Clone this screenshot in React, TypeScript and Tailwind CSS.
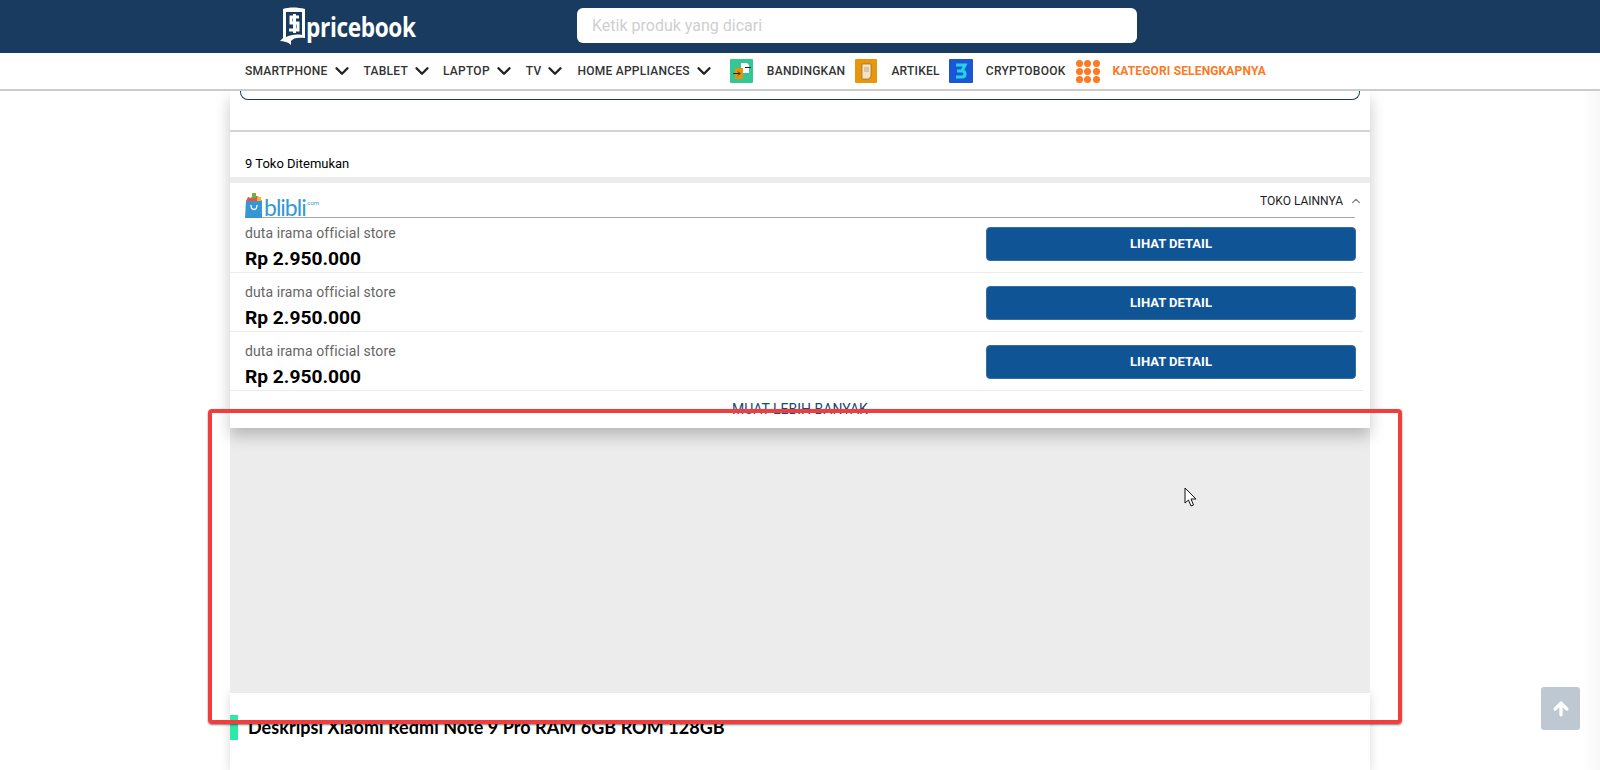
import React from 'react';
import { ChevronDown, ChevronUp, ArrowUp } from 'lucide-react';

const NAV_ITEMS = [
  { label: 'SMARTPHONE', gap: 'mr-[11px]' },
  { label: 'TABLET', gap: 'mr-[10px]' },
  { label: 'LAPTOP', gap: 'mr-[11px]' },
  { label: 'TV', gap: 'mr-[11px]' },
  { label: 'HOME APPLIANCES', gap: 'mr-[15px]' },
];

function PricebookLogo() {
  return (
    <div className="flex items-center w-[140px] h-[40px] mt-[6px]">
      <svg width="26" height="38" viewBox="0 0 26 38" className="shrink-0">
        <path d="M3 2 C9 0 17 0 25 2 V31 C18 30 13 31 11 34 L11 38 C8 35 4 34 0 34 L3 31 Z" fill="#fff" />
        <path d="M6 5 H22 V28 C16 27 10 28 6 30 Z" fill="#183b5f" />
        <path d="M19 10 H11 V16 H18 V23 H9 M14.5 7 V26" fill="none" stroke="#fff" strokeWidth="3" />
      </svg>
      <span className="text-white text-[26px] font-bold leading-none mt-[1px] tracking-[-0.4px] font-['Open_Sans',sans-serif] scale-x-[0.87] origin-left">
        pricebook
      </span>
    </div>
  );
}

function CompareIcon() {
  return (
    <svg width="23" height="24" viewBox="0 0 23 24" className="shrink-0">
      <rect width="23" height="24" rx="1" fill="#34c796" />
      <path d="M11 4 H17 L19 6 V14 H11 Z" fill="#fff" />
      <rect x="5" y="9" width="8" height="11" fill="#e8930c" />
      <path d="M3 14.5 H10 M8 12.5 L10 14.5 L8 16.5 M15 8.5 H21" fill="none" stroke="#222" strokeWidth="1" />
    </svg>
  );
}

function ArticleIcon() {
  return (
    <svg width="22" height="24" viewBox="0 0 22 24" className="shrink-0">
      <rect width="22" height="24" rx="1" fill="#e8960c" />
      <path d="M7 5 H16 V17 L14 20 H7 Z" fill="#f3e3c4" stroke="#8a6a30" strokeWidth="0.7" />
      <path d="M9 8 H14 V13 H9 Z" fill="#d9c7a3" />
    </svg>
  );
}

function CryptoIcon() {
  return (
    <svg width="24" height="24" viewBox="0 0 24 24" className="shrink-0">
      <rect width="24" height="24" rx="1" fill="#1a56d6" />
      <path d="M7 6 H16 L13 12 H8 M13 12 C17 12 17 18 13 18 H7" fill="none" stroke="#22d3e6" strokeWidth="3.2" />
    </svg>
  );
}

function GridDots() {
  return (
    <div className="grid grid-cols-3 gap-[1px] w-[25px] shrink-0">
      {Array.from({ length: 9 }).map((_, i) => (
        <div key={i} className="w-[7px] h-[7px] rounded-full bg-[#fb7a24]" />
      ))}
    </div>
  );
}

function BlibliLogo() {
  return (
    <div className="flex items-end h-[26px]">
      <svg width="18" height="26" viewBox="0 0 18 26" className="shrink-0">
        <path d="M1 8 L3 4 L6 5 L8 2 L12 3 L14 4 L17 8 Z" fill="#e8553a" />
        <path d="M7 0 H11 V5 H7 Z" fill="#6cb33f" />
        <path d="M12 4 H16 V8 H12 Z" fill="#f2b632" />
        <path d="M1 8 H17 V25 H0 Z" fill="#3597d3" />
        <path d="M6 12 C6 18 12 18 12 12" fill="none" stroke="#fff" strokeWidth="1.3" />
      </svg>
      <span className="text-[#3597d3] text-[23px] leading-[23px] ml-[1px] tracking-[-1px] font-['Lato',sans-serif]">blibli</span>
      <span className="text-[#3597d3] text-[6px] leading-none self-start mt-[7px] font-['Roboto',sans-serif]">.com</span>
    </div>
  );
}

function StoreRow({ first = false }: { first?: boolean }) {
  return (
    <div className={`flex items-start justify-between h-[59px] border-b border-[#ebebeb] mr-[7px] ${first ? '-mt-[4px]' : ''}`}>
      <div className="pl-[15px]">
        <div className="text-[14px] leading-[16px] text-[#666] mt-[11px] tracking-[0.1px]">duta irama official store</div>
        <div className="text-[19.2px] leading-[21px] font-bold text-black mt-[7px]">Rp 2.950.000</div>
      </div>
      <button className="w-[370px] h-[34px] mt-[13px] mr-[7px] pb-[2px] rounded-[4px] bg-[#0f5596] border border-[#3a6c9c] text-white text-[13px] leading-[15px] font-bold">
        LIHAT DETAIL
      </button>
    </div>
  );
}

export default function App() {
  return (
    <div className="relative w-full h-[770px] overflow-hidden bg-white font-['Roboto',sans-serif]">
      <header className="relative z-10 h-[53px] bg-[#183b5f] flex">
        <div className="ml-[280px] w-[297px]">
          <PricebookLogo />
        </div>
        <div className="w-[560px] h-[35px] mt-[8px] bg-white rounded-[6px] flex items-center pl-[15px] text-[16px] text-[#cfcfcf]">
          Ketik produk yang dicari
        </div>
      </header>

      <nav className="relative z-10 h-[38px] bg-white border-b-2 border-[#cccccc] flex items-center pl-[245px] text-[12px] font-medium tracking-[0.25px] text-[#333]">
        {NAV_ITEMS.map((item) => (
          <div key={item.label} className={`flex items-center ${item.gap}`}>
            <span>{item.label}</span>
            <ChevronDown size={22} strokeWidth={2.6} className="ml-[3px] text-[#222]" />
          </div>
        ))}
        <CompareIcon />
        <span className="ml-[14px] mr-[10px]">BANDINGKAN</span>
        <ArticleIcon />
        <span className="ml-[14px] mr-[9px]">ARTIKEL</span>
        <CryptoIcon />
        <span className="ml-[13px] mr-[10px]">CRYPTOBOOK</span>
        <GridDots />
        <span className="ml-[12px] font-bold tracking-[0.15px] text-[#fb7a24]">KATEGORI SELENGKAPNYA</span>
      </nav>

      <main className="w-[1140px] mx-auto">
        <section className="relative z-[1] bg-white shadow-[0_8px_14px_rgba(0,0,0,0.22)]">
          <div className="h-[9px] mx-[10px] border border-t-0 border-[#183b5f] rounded-b-[8px]" />
          <div className="h-[30px]" />
          <div className="h-[2px] bg-[#d4d4d4]" />
          <div className="h-[45px] pl-[15px] flex items-end pb-[6px] text-[13px] leading-[14px] text-black">9 Toko Ditemukan</div>
          <div className="h-[6px] bg-[#ececec]" />
          <div className="h-[35px] mx-[15px] pt-[10px] flex justify-between border-b border-[#a8a8a8] relative">
            <BlibliLogo />
            <div className="absolute right-[-8px] top-[11px] flex items-center text-[12px] leading-[14px] text-[#222]">
              TOKO LAINNYA
              <ChevronUp size={14} className="ml-[6px] text-[#888]" />
            </div>
          </div>
          <StoreRow first />
          <StoreRow />
          <StoreRow />
          <div className="h-[37px] pt-[10px] text-center text-[14px] leading-[16px] text-[#1a4a7a]">MUAT LEBIH BANYAK</div>
        </section>

        <div className="relative h-[265px] bg-[#ececec]" />

        <section className="bg-white h-[80px] shadow-[0_0_10px_rgba(0,0,0,0.15)] pt-[22px]">
          <div className="flex items-center h-[25px]">
            <div className="w-[8px] h-[25px] bg-[#2ee8a5]" />
            <h2 className="ml-[10px] text-[18px] font-bold tracking-[0.05px] text-black font-['Lato',sans-serif]">
              Deskripsi Xiaomi Redmi Note 9 Pro RAM 6GB ROM 128GB
            </h2>
          </div>
        </section>
      </main>

      {/* faint strip at the right window edge */}
      <div className="absolute right-0 top-[53px] bottom-0 w-[18px] bg-linear-to-r from-white to-[#f8f8f8]" />

      {/* red annotation frame lying over the page */}
      <div className="absolute left-[208px] top-[409px] w-[1194px] h-[315px] border-4 border-[#f03e3e] rounded-[4px] shadow-[0_1px_2px_rgba(0,0,0,0.5)] z-20" />

      {/* mouse pointer */}
      <svg width="14" height="22" viewBox="0 0 14 22" className="absolute left-[1184px] top-[487px] z-20">
        <path d="M1 1 V16 L4.5 13 L7 19 L9.5 18 L7 12 H12 Z" fill="#fff" stroke="#111" strokeWidth="1" />
      </svg>

      {/* back to top */}
      <button className="absolute left-[1541px] top-[687px] w-[39px] h-[43px] rounded-[3px] bg-[#bdc8d2] flex items-center justify-center text-white z-20">
        <ArrowUp size={20} strokeWidth={4} />
      </button>
    </div>
  );
}
